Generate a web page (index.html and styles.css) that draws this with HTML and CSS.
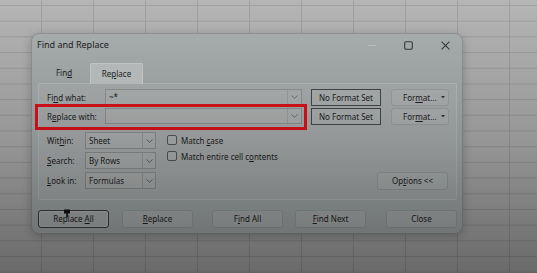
FILE: index.html
```html
<!DOCTYPE html>
<html>
<head>
<meta charset="utf-8">
<link rel="stylesheet" href="styles.css">
</head>
<body>
<div class="desk">
  <div class="dialog">
    <div class="titlebar">
      <span class="title">Find and Replace</span>
      <div class="winctl">
        <svg class="wmin" width="9" height="9" viewBox="0 0 9 9"><path d="M0.5 4.5H8.5" stroke="#c4c8c8" stroke-width="1"/></svg>
        <svg class="wmax" width="9" height="9" viewBox="0 0 9 9"><rect x="0.7" y="0.7" width="7.6" height="7.6" rx="1.2" fill="none" stroke="#3a3c3c" stroke-width="1.1"/></svg>
        <svg class="wclose" width="9" height="9" viewBox="0 0 9 9"><path d="M0.6 0.6L8.4 8.4M8.4 0.6L0.6 8.4" stroke="#3a3c3c" stroke-width="1.1"/></svg>
      </div>
    </div>
    <div class="tabs">
      <div class="tab">Fin<u>d</u></div>
      <div class="tab active">Re<u>p</u>lace</div>
    </div>
    <div class="panel">
      <div class="frow">
        <span class="flabel">Fi<u>n</u>d what:</span>
        <div class="combo"><span class="val">~*</span><span class="cbtn"><svg width="7" height="4" viewBox="0 0 7 4"><path d="M0.5 0.5L3.5 3.3L6.5 0.5" fill="none" stroke="#6e7272" stroke-width="0.9"/></svg></span></div>
        <div class="nfs">No Format Set</div>
        <div class="fmt"><span>For<u>m</u>at...</span><svg class="tri" width="4" height="3" viewBox="0 0 4 3"><path d="M0 0H4L2 2.5Z" fill="#3a3a3a"/></svg></div>
      </div>
      <div class="frow">
        <span class="flabel">R<u>e</u>place with:</span>
        <div class="combo"><span class="val"></span><span class="cbtn"><svg width="7" height="4" viewBox="0 0 7 4"><path d="M0.5 0.5L3.5 3.3L6.5 0.5" fill="none" stroke="#6e7272" stroke-width="0.9"/></svg></span></div>
        <div class="nfs">No Format Set</div>
        <div class="fmt"><span>For<u>m</u>at...</span><svg class="tri" width="4" height="3" viewBox="0 0 4 3"><path d="M0 0H4L2 2.5Z" fill="#3a3a3a"/></svg></div>
      </div>
      <div class="opts">
        <div class="selects">
          <div class="srow"><span class="slabel">Wit<u>h</u>in:</span><div class="sel"><span class="val">Sheet</span><span class="sbtn"><svg width="7" height="4" viewBox="0 0 7 4"><path d="M0.5 0.5L3.5 3.3L6.5 0.5" fill="none" stroke="#5e6262" stroke-width="0.9"/></svg></span></div></div>
          <div class="srow"><span class="slabel"><u>S</u>earch:</span><div class="sel"><span class="val">By Rows</span><span class="sbtn"><svg width="7" height="4" viewBox="0 0 7 4"><path d="M0.5 0.5L3.5 3.3L6.5 0.5" fill="none" stroke="#5e6262" stroke-width="0.9"/></svg></span></div></div>
          <div class="srow"><span class="slabel"><u>L</u>ook in:</span><div class="sel"><span class="val">Formulas</span><span class="sbtn"><svg width="7" height="4" viewBox="0 0 7 4"><path d="M0.5 0.5L3.5 3.3L6.5 0.5" fill="none" stroke="#5e6262" stroke-width="0.9"/></svg></span></div></div>
        </div>
        <div class="checks">
          <div class="chk"><span class="box"></span><span>Match <u>c</u>ase</span></div>
          <div class="chk"><span class="box"></span><span>Match entire cell c<u>o</u>ntents</span></div>
        </div>
        <div class="btn optbtn">Op<u>t</u>ions &lt;&lt;</div>
      </div>
      <div class="highlight"></div>
    </div>
    <div class="buttons">
      <div class="btn bbtn focus">Replace <u>A</u>ll
        <svg class="cursor" width="8" height="9" viewBox="0 0 8 9"><path d="M1 0.5H7V4.5H4.8V8.5H3.2V4.5H1Z" fill="#151515"/></svg>
      </div>
      <div class="btn bbtn b2"><u>R</u>eplace</div>
      <div class="btn bbtn b3">F<u>i</u>nd All</div>
      <div class="btn bbtn b4"><u>F</u>ind Next</div>
      <div class="btn bbtn b5">Close</div>
    </div>
  </div>
</div>
<div class="shade"></div>
</body>
</html>
```

FILE: styles.css
```css
html, body {
  margin: 0;
  padding: 0;
}
body {
  width: 537px;
  height: 273px;
  overflow: hidden;
  font-family: "Noto Sans", "Open Sans", sans-serif;
  color: #222323;
  background-color: #b6b6b6;
  background-image:
    linear-gradient(to right, #a2a2a2 1px, transparent 1px),
    linear-gradient(to bottom, #a2a2a2 1px, transparent 1px);
  background-size: 52px 15.7px;
  background-position: 41px 5px;
}
u {
  text-decoration-thickness: 1px;
  text-underline-offset: 1px;
}
.desk {
  padding: 33px 0 0 31px;
}
.dialog {
  position: relative;
  box-sizing: border-box;
  width: 432px;
  height: 201px;
  background: #adb3b3;
  border: 1px solid #939898;
  border-radius: 8px;
  box-shadow: 0 2px 10px rgba(0,0,0,0.22);
}
.titlebar {
  height: 29px;
  display: flex;
  align-items: flex-start;
}
.title {
  font-size: 9px;
  line-height: 12px;
  margin: 5px 0 0 5px;
  color: #222424;
}
.winctl {
  margin-left: auto;
  margin-right: 12px;
  margin-top: 7px;
  display: flex;
  gap: 28px;
}
.tabs {
  display: flex;
  padding-left: 6px;
  height: 21px;
  margin-bottom: -1px;
}
.tab {
  width: 52px;
  box-sizing: border-box;
  font-size: 8px;
  line-height: 20px;
  text-align: center;
}
.tab.active {
  position: relative;
  z-index: 1;
  width: 53px;
  background: #b3b7b7;
  border: 1px solid #c0c4c4;
  border-bottom: none;
  border-radius: 2px 2px 0 0;
  line-height: 19px;
}
.panel {
  position: relative;
  box-sizing: border-box;
  margin-left: 6px;
  width: 419px;
  height: 117px;
  background: #b3b7b7;
  border: 1px solid #c0c4c4;
  border-radius: 2px;
  padding: 5px 0 0 8px;
}
.frow {
  display: flex;
  align-items: center;
  height: 16px;
  margin-bottom: 3px;
  font-size: 8px;
}
.flabel {
  width: 58px;
}
.combo {
  box-sizing: border-box;
  width: 197px;
  height: 16px;
  display: flex;
  align-items: center;
  background: #b8bbbb;
  border: 1px solid #979b9b;
}
.combo .val {
  flex: 1;
  padding-left: 3px;
  line-height: 14px;
}
.cbtn {
  width: 13px;
  height: 14px;
  display: flex;
  align-items: center;
  justify-content: center;
  border-left: 1px solid #a6aaaa;
}
.nfs {
  box-sizing: border-box;
  margin-left: 9px;
  width: 70px;
  height: 17px;
  border: 1px solid #4a4c4c;
  background: #b6baba;
  text-align: center;
  line-height: 15px;
}
.fmt {
  box-sizing: border-box;
  margin-left: 10px;
  width: 58px;
  height: 17px;
  border: 1px solid #a5a9a9;
  border-radius: 3px;
  background: #b8bcbc;
  display: flex;
  align-items: center;
  padding-left: 11px;
  line-height: 15px;
}
.fmt .tri {
  margin-left: auto;
  margin-right: 3px;
}
.opts {
  display: flex;
  margin-top: 8px;
  height: 58px;
  font-size: 8px;
}
.selects {
  display: flex;
  flex-direction: column;
  gap: 3px;
}
.srow {
  display: flex;
  align-items: center;
  height: 17px;
}
.slabel {
  width: 38px;
}
.sel {
  box-sizing: border-box;
  width: 71px;
  height: 17px;
  display: flex;
  align-items: center;
  background: #b9bcbc;
  border: 1px solid #959999;
}
.sel .val {
  flex: 1;
  padding-left: 3px;
  line-height: 15px;
}
.sbtn {
  width: 12px;
  height: 15px;
  display: flex;
  align-items: center;
  justify-content: center;
  border-left: 1px solid #9ea2a2;
}
.checks {
  margin-left: 11px;
  margin-top: 0;
  display: flex;
  flex-direction: column;
}
.chk {
  display: flex;
  align-items: center;
  height: 16px;
}
.box {
  box-sizing: border-box;
  width: 10px;
  height: 10px;
  border: 1px solid #5a5d5d;
  border-radius: 2px;
  background: #b9bcbc;
  margin-right: 4px;
}
.btn {
  box-sizing: border-box;
  height: 18px;
  border: 1px solid #a2a6a6;
  border-radius: 3px;
  background: #b8bcbc;
  font-size: 8px;
  line-height: 16px;
  text-align: center;
}
.optbtn {
  margin-left: auto;
  margin-right: 8px;
  align-self: flex-end;
  width: 71px;
}
.highlight {
  position: absolute;
  left: -4px;
  top: 20px;
  width: 272px;
  height: 26px;
  box-sizing: border-box;
  border: 3px solid #e8131c;
}
.buttons {
  display: flex;
  padding-left: 6px;
  margin-top: 10px;
}
.bbtn {
  width: 71px;
  position: relative;
}
.bbtn.focus {
  border: 1px solid #3e4040;
  box-shadow: inset 0 0 0 1px #c6caca;
}
.b2 { margin-left: 13px; }
.b3 { margin-left: 19px; }
.b4 { margin-left: 12px; }
.b5 { margin-left: 20px; }
.cursor {
  position: absolute;
  left: 24px;
  top: -2px;
}
.shade {
  position: fixed;
  left: 0;
  top: 0;
  width: 537px;
  height: 273px;
  pointer-events: none;
  background: linear-gradient(to bottom, rgba(0,0,0,0) 0%, rgba(0,0,0,0.17) 50%, rgba(0,0,0,0.42) 100%);
}
```
